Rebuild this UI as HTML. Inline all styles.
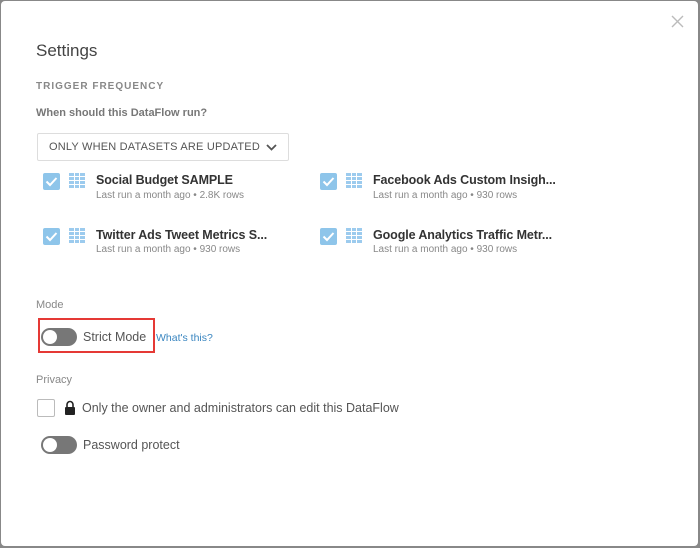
<!DOCTYPE html>
<html><head><style>
*{margin:0;padding:0;box-sizing:border-box}
body{width:700px;height:548px;background:#888;font-family:"Liberation Sans",sans-serif;position:relative;overflow:hidden}
.win{position:absolute;left:1px;top:1px;width:697px;height:545px;background:#fff;border-radius:4px}
.a{position:absolute;white-space:nowrap}
.cb{position:absolute;width:17px;height:17px;background:#8ec5ea;border-radius:2px}
.cb svg{position:absolute;left:2px;top:3px}
.grid{position:absolute;width:16px;height:15px}
.t{font-weight:bold;font-size:12.5px;color:#333;letter-spacing:-.1px}
.s{font-size:10px;color:#888}
.tog{position:absolute;width:36px;height:18px;border-radius:9px;background:#777}
.tog:after{content:"";position:absolute;left:2px;top:2px;width:14px;height:14px;border-radius:50%;background:#fff}
</style></head><body><div class="win">
<svg class="a" style="left:670px;top:14px" width="13" height="13"><path d="M1 1l11 11M12 1L1 12" stroke="#bbb" stroke-width="1.4"/></svg>
<div class="a" style="left:35px;top:40px;font-size:17px;color:#444">Settings</div>
<div class="a" style="left:35px;top:80px;font-size:10px;color:#888;letter-spacing:1px;font-weight:bold">TRIGGER FREQUENCY</div>
<div class="a" style="left:35px;top:106px;font-size:11px;color:#777;font-weight:bold">When should this DataFlow run?</div>
<div class="a" style="left:36px;top:132px;width:252px;height:28px;border:1px solid #ddd;border-radius:2px;font-size:11px;color:#555;letter-spacing:.2px;padding:7px 11px">ONLY WHEN DATASETS ARE UPDATED
<svg style="position:absolute;right:11px;top:10px" width="11" height="7"><path d="M1 1l4.5 4.5L10 1" stroke="#555" stroke-width="1.8" fill="none"/></svg></div>

<svg width="0" height="0" style="position:absolute"><defs><g id="g"><rect width="16" height="15" fill="#9ccbee"/><path d="M0 3.5h16M0 7.5h16M0 11.5h16M5.5 0v15M10.5 0v15" stroke="#fff" stroke-width="1"/></g></defs></svg>

<div class="cb" style="left:42px;top:172px"><svg width="13" height="11"><path d="M1.5 5.5l3.5 3.5L11.5 2" stroke="#fff" stroke-width="2" fill="none"/></svg></div>
<svg class="grid" style="left:68px;top:172px"><use href="#g"/></svg>
<div class="a t" style="left:95px;top:172px">Social Budget SAMPLE</div>
<div class="a s" style="left:95px;top:189px">Last run a month ago • 2.8K rows</div>

<div class="cb" style="left:319px;top:172px"><svg width="13" height="11"><path d="M1.5 5.5l3.5 3.5L11.5 2" stroke="#fff" stroke-width="2" fill="none"/></svg></div>
<svg class="grid" style="left:345px;top:172px"><use href="#g"/></svg>
<div class="a t" style="left:372px;top:172px">Facebook Ads Custom Insigh...</div>
<div class="a s" style="left:372px;top:189px">Last run a month ago • 930 rows</div>

<div class="cb" style="left:42px;top:227px"><svg width="13" height="11"><path d="M1.5 5.5l3.5 3.5L11.5 2" stroke="#fff" stroke-width="2" fill="none"/></svg></div>
<svg class="grid" style="left:68px;top:227px"><use href="#g"/></svg>
<div class="a t" style="left:95px;top:227px">Twitter Ads Tweet Metrics S...</div>
<div class="a s" style="left:95px;top:243px">Last run a month ago • 930 rows</div>

<div class="cb" style="left:319px;top:227px"><svg width="13" height="11"><path d="M1.5 5.5l3.5 3.5L11.5 2" stroke="#fff" stroke-width="2" fill="none"/></svg></div>
<svg class="grid" style="left:345px;top:227px"><use href="#g"/></svg>
<div class="a t" style="left:372px;top:227px">Google Analytics Traffic Metr...</div>
<div class="a s" style="left:372px;top:243px">Last run a month ago • 930 rows</div>

<div class="a" style="left:35px;top:298px;font-size:11px;color:#888">Mode</div>
<div class="a" style="left:37px;top:317px;width:117px;height:35px;border:2px solid #e53935"></div>
<div class="tog" style="left:40px;top:327px"></div>
<div class="a" style="left:82px;top:329px;font-size:12.5px;color:#555">Strict Mode</div>
<div class="a" style="left:155px;top:331px;font-size:10.5px;color:#3a86c0">What's this?</div>

<div class="a" style="left:35px;top:373px;font-size:11px;color:#888">Privacy</div>
<div class="a" style="left:36px;top:398px;width:18px;height:18px;border:1px solid #bbb;border-radius:2px"></div>
<svg class="a" style="left:63px;top:399px" width="12" height="15"><path d="M3 7V4.5a3 3 0 0 1 6 0V7" stroke="#222" stroke-width="1.6" fill="none"/><rect x="1" y="7" width="10" height="8" rx="1" fill="#222"/></svg>
<div class="a" style="left:81px;top:400px;font-size:12.5px;color:#555">Only the owner and administrators can edit this DataFlow</div>
<div class="tog" style="left:40px;top:435px"></div>
<div class="a" style="left:82px;top:437px;font-size:12.5px;color:#555">Password protect</div>
</div></body></html>
